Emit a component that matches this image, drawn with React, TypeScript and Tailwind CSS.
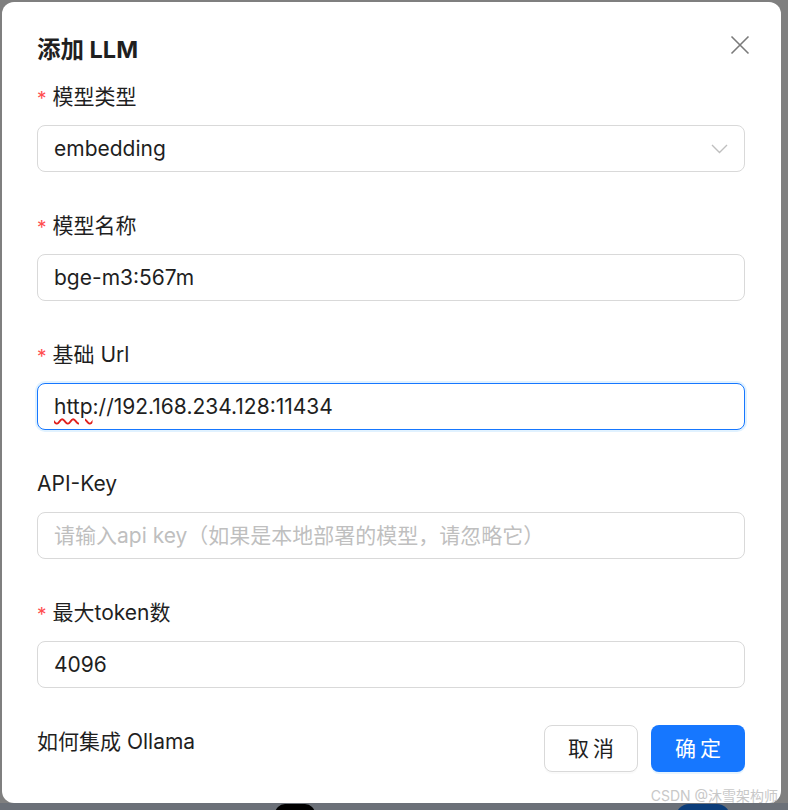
import React from "react";

const font = { fontFamily: 'Inter, "Noto Sans CJK SC", sans-serif' };

function Label({ text, required }: { text: string; required?: boolean }) {
  return (
    <div className="flex items-center h-[30px] pt-[2px] mb-[14px] text-[21px] leading-[28px] text-[#1f1f1f]">
      {required && <span className="text-[#ff4d4f] text-[19px] mr-[6px] leading-none mt-[2px]">*</span>}
      <span>{text}</span>
    </div>
  );
}

function Box({ children, focused }: { children: React.ReactNode; focused?: boolean }) {
  return (
    <div
      className={
        "h-[47px] mb-[38px] rounded-[8px] border flex items-center px-[16px] text-[21px] bg-white " +
        (focused
          ? "border-[#1677ff] shadow-[0_0_0_2px_rgba(5,145,255,0.12)]"
          : "border-[#d9d9d9]")
      }
    >
      {children}
    </div>
  );
}

export default function App() {
  return (
    <div className="w-[788px] h-[810px] bg-[#7f7f7f] relative overflow-hidden" style={font}>
      <div className="absolute left-0 right-0 bottom-0 h-[7px] bg-[#6b7078]" />
      <div className="absolute left-[275px] bottom-[-14px] w-[40px] h-[20px] rounded-full bg-black" />
      <div className="absolute left-[676px] bottom-[-20px] w-[54px] h-[26px] rounded-full bg-[#0b3d7a]" />
      <div className="relative ml-[2px] mt-[2px] w-[779px] h-[801px] bg-white rounded-[12px] pl-[35px] pr-[36px] pt-[33px]">
        <div className="h-[30px] text-[23.5px] leading-[30px] font-bold text-[#1f1f1f] mb-[16px]">添加 LLM</div>
        <svg className="absolute left-[728px] top-[33px]" width="20" height="20" viewBox="0 0 20 20">
          <path d="M1.5 1.5 L18.5 18.5 M18.5 1.5 L1.5 18.5" stroke="#7a7a7a" strokeWidth="1.6" fill="none" />
        </svg>

        <Label text="模型类型" required />
        <Box>
          <span className="flex-1 text-[#1f1f1f]">embedding</span>
          <svg width="17" height="10" viewBox="0 0 17 10">
            <path d="M1 1 L8.5 8.5 L16 1" stroke="#bfbfbf" strokeWidth="1.4" fill="none" />
          </svg>
        </Box>

        <Label text="模型名称" required />
        <Box>
          <span className="text-[#1f1f1f]">bge-m3:567m</span>
        </Box>

        <Label text="基础 Url" required />
        <Box focused>
          <span className="text-[#1f1f1f]">
            <span className="underline decoration-wavy decoration-[#e0201c] decoration-[1.5px] underline-offset-[4px]">http</span>
            ://192.168.234.128:11434
          </span>
        </Box>

        <Label text="API-Key" />
        <Box>
          <span className="text-[#bfbfbf]">请输入api key（如果是本地部署的模型，请忽略它）</span>
        </Box>

        <Label text="最大token数" required />
        <Box>
          <span className="text-[#1f1f1f]">4096</span>
        </Box>

        <div className="flex justify-between items-start -mt-[1px]">
          <div className="mt-[3px] text-[21px] leading-[28px] text-[#1f1f1f]">如何集成 Ollama</div>
          <div className="flex gap-[13px]">
            <button className="w-[94px] h-[47px] rounded-[8px] border border-[#d9d9d9] bg-white text-[21px] text-[#1f1f1f] tracking-[4px] pl-[4px] shadow-[0_2px_0_rgba(0,0,0,0.02)]">
              取消
            </button>
            <button className="w-[94px] h-[47px] rounded-[8px] bg-[#1677ff] text-[21px] text-white tracking-[4px] pl-[4px] shadow-[0_2px_0_rgba(5,145,255,0.1)]">
              确定
            </button>
          </div>
        </div>
      </div>
      <div className="absolute right-[10px] top-[787px] text-[14px] leading-[17px] text-[#c8c8c8] whitespace-nowrap">
        CSDN @沐雪架构师
      </div>
    </div>
  );
}
